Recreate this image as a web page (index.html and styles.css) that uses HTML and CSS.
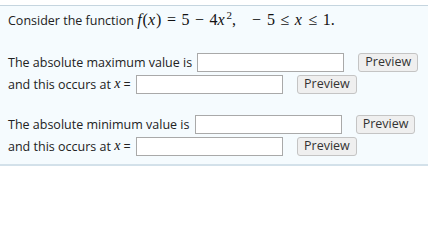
FILE: index.html
```html
<!DOCTYPE html>
<html>
<head>
<meta charset="utf-8">
<link rel="stylesheet" href="styles.css">
</head>
<body>
<div class="problem">
  <p class="intro">Consider the function <span class="math"><i>f</i>(<i>x</i>)<span class="op">=</span>5<span class="op">−</span>4<i>x</i><sup>2</sup>,<span class="gap"></span>−<span class="sp"></span>5<span class="op">≤</span><i>x</i><span class="op">≤</span>1.</span></p>
  <div class="group">
    <div class="row">The absolute maximum value is <input class="ans" type="text"><button class="preview">Preview</button></div>
    <div class="row">and this occurs at <i class="mx">x</i> = <input class="ans" type="text"><button class="preview">Preview</button></div>
  </div>
  <div class="group">
    <div class="row">The absolute minimum value is <input class="ans" type="text"><button class="preview">Preview</button></div>
    <div class="row">and this occurs at <i class="mx">x</i> = <input class="ans" type="text"><button class="preview">Preview</button></div>
  </div>
</div>
</body>
</html>
```
FILE: styles.css
```css
html, body { margin: 0; padding: 0; background: #fff; }
body { font-family: "Open Sans", sans-serif; font-size: 12.5px; color: #222; }
.problem {
  margin-top: 5px;
  background: #f5fbfe;
  border-top: 1px solid #c5d5df;
  border-bottom: 2px solid #d3e1ea;
  padding: 3px 8px 7px 8px;
}
.intro { margin: 0 0 19px 0; line-height: 22px; }
.math { font-family: "Liberation Serif", serif; font-size: 16px; color: #111; }
.math i { padding-right: 1px; }
.math .op { margin: 0 5.5px; }
.math .gap { display: inline-block; width: 16px; }
.math .sp { display: inline-block; width: 6px; }
.math sup { font-size: 11px; line-height: 0; vertical-align: 0.55em; margin-left: 1px; }
.mx { font-family: "Liberation Serif", serif; font-size: 14px; color: #111; }
.group { margin-bottom: 18px; }
.group:last-child { margin-bottom: 0; }
.row { display: flex; align-items: center; height: 22px; white-space: pre; }
.ans {
  box-sizing: border-box;
  width: 147px; height: 19px;
  border: 1px solid #a9a9a9; background: #fff;
  margin: 0 0 0 2px; padding: 0;
}
.preview {
  box-sizing: border-box;
  height: 19px; margin-left: 14px;
  font-family: "Open Sans", sans-serif; font-size: 12.5px; color: #333;
  background: #efefef; border: 1px solid #c4c4c4; border-radius: 3px;
  padding: 0 6px; line-height: 16px;
}
```
